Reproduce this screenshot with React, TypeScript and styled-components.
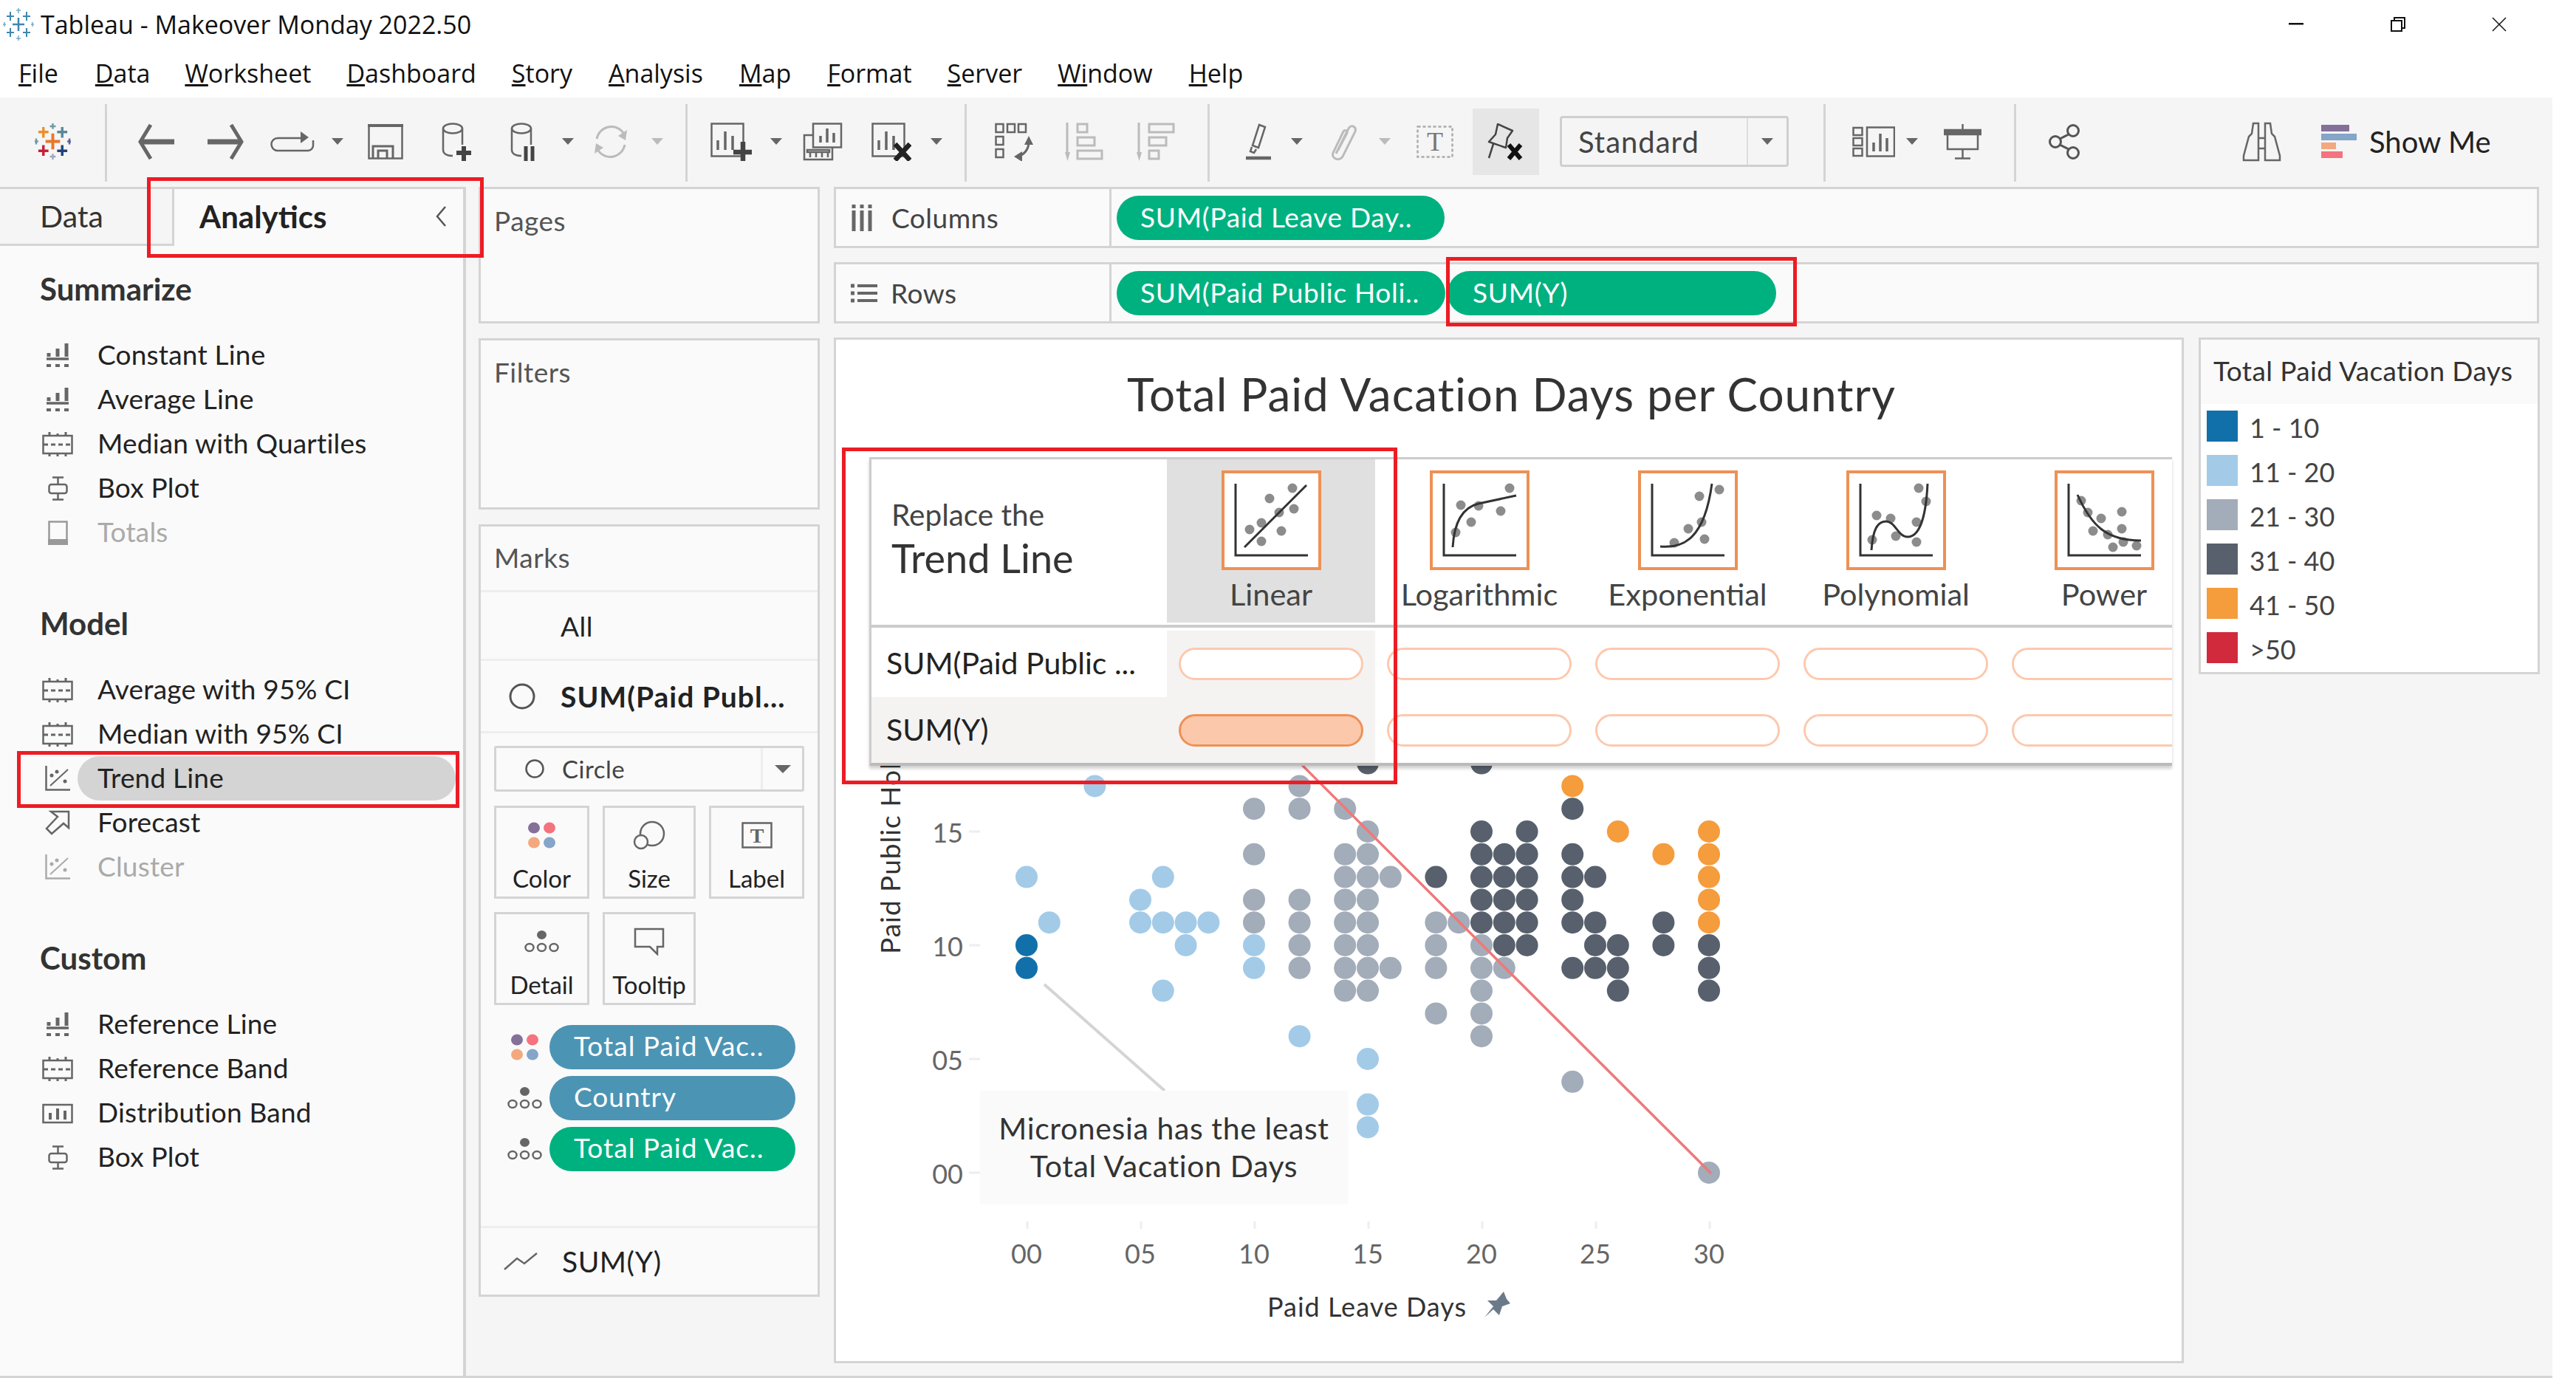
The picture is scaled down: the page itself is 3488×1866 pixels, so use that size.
import React from 'react';
import styled, { createGlobalStyle } from 'styled-components';

const TAB = `'Lato', 'Open Sans', sans-serif`;
const WIN = `'Open Sans', 'Noto Sans', sans-serif`;
const EDGE = '#d4d4d4';
const GREEN = '#00b180';
const BLUE = '#4c94b4';
const ICON = '#666666';
const FADED = '#bbbbbb';

const GlobalStyle = createGlobalStyle`
  html, body { margin: 0; padding: 0; background: #fff; }
  #root { width: 3488px; height: 1866px; overflow: hidden; }
`;

/* ---------- toolbar icons ---------- */

const Back = () => (
  <svg width="50" height="50" viewBox="0 0 50 50">
    <path d="M50 25H6" stroke={ICON} strokeWidth="7" fill="none" />
    <path d="M18 2L4 25l14 23" stroke={ICON} strokeWidth="5" fill="none" />
  </svg>
);
const Forward = () => (
  <svg width="50" height="50" viewBox="0 0 50 50">
    <path d="M0 25h44" stroke={ICON} strokeWidth="7" fill="none" />
    <path d="M32 2l14 23-14 23" stroke={ICON} strokeWidth="5" fill="none" />
  </svg>
);
const Loop = () => (
  <svg width="60" height="28" viewBox="0 0 60 28">
    <path d="M42 9H10a8.500 8.500 0 0 0 0 17h41a7 7 0 0 0 7-7V12" stroke={ICON} strokeWidth="2.500" fill="none" />
    <path d="M41 0l11 8-11 8z" fill={ICON} />
  </svg>
);
const Save = () => (
  <svg width="48" height="48" viewBox="0 0 48 48">
    <rect x="1.500" y="1.500" width="45" height="45" stroke={ICON} strokeWidth="2.500" fill="none" />
    <rect x="0" y="0" width="48" height="4" fill={ICON} />
    <path d="M7 46V30h27v16M14 46V36h12v10" stroke={ICON} strokeWidth="3" fill="none" />
  </svg>
);
const Can = ({ children }: { children: React.ReactNode }) => (
  <svg width="42" height="52" viewBox="0 0 42 52">
    <ellipse cx="16" cy="8" rx="13" ry="6.500" stroke={ICON} strokeWidth="2.500" fill="none" />
    <path d="M3 8v29c0 5 5 8 13 8M29 8v22" stroke={ICON} strokeWidth="2.500" fill="none" />
    {children}
  </svg>
);
const CanAdd = () => (
  <Can>
    <path d="M31 32v20M21 41h20" stroke="#444" strokeWidth="6" fill="none" />
  </Can>
);
const CanPause = () => (
  <Can>
    <path d="M22 32v20M31 32v20" stroke="#444" strokeWidth="5" fill="none" />
  </Can>
);
const Refresh = () => (
  <svg width="48" height="48" viewBox="0 0 48 48" fill="none" stroke={FADED} strokeWidth="3">
    <path d="M5 20A20 20 0 0 1 41 12" />
    <path d="M43 28A20 20 0 0 1 7 36" />
    <path d="M46 8l-2 14-10-6z" fill={FADED} stroke="none" />
    <path d="M2 40l2-14 10 6z" fill={FADED} stroke="none" />
  </svg>
);
const SheetBars = () => <path d="M10 37V24M20 37V12M30 37V18" stroke={ICON} strokeWidth="3.500" fill="none" />;
const NewSheet = () => (
  <svg width="56" height="52" viewBox="0 0 56 52">
    <rect x="1.500" y="1.500" width="43" height="44" stroke={ICON} strokeWidth="2.500" fill="none" />
    <SheetBars />
    <path d="M44 26v26M31 40h25" stroke="#444" strokeWidth="6.500" fill="none" />
  </svg>
);
const Duplicate = () => (
  <svg width="54" height="52" viewBox="0 0 54 52" fill="none" stroke={ICON}>
    <rect x="14" y="1.500" width="38" height="32" strokeWidth="2.500" />
    <path d="M24 27V18M33 27V8M42 27V14" strokeWidth="3.500" />
    <path d="M14 17H2v33h38V34" strokeWidth="2.500" />
    <path d="M6 37h30v3H6zM10 40v7M18 40v7M26 40v7M34 40v7" strokeWidth="2.500" />
  </svg>
);
const ClearSheet = () => (
  <svg width="54" height="52" viewBox="0 0 54 52">
    <rect x="1.500" y="1.500" width="43" height="44" stroke={ICON} strokeWidth="2.500" fill="none" />
    <SheetBars />
    <path d="M32 29l20 22M52 29L32 51" stroke="#222" strokeWidth="6.500" fill="none" />
  </svg>
);
const Swap = () => (
  <svg width="54" height="52" viewBox="0 0 54 52" fill="none" stroke={ICON} strokeWidth="2.500">
    <rect x="1.500" y="2" width="10" height="11" />
    <rect x="17" y="2" width="10" height="11" />
    <rect x="32" y="2" width="10" height="11" />
    <rect x="1.500" y="19" width="10" height="11" />
    <rect x="1.500" y="36" width="10" height="11" />
    <path d="M46 26c0 10-6 18-16 20" strokeWidth="3" />
    <path d="M46 18l6 12H40zM26 46l11-7v14z" fill={ICON} stroke="none" />
  </svg>
);
const SortAsc = () => (
  <svg width="52" height="52" viewBox="0 0 52 52" fill="none" stroke={FADED} strokeWidth="3">
    <path d="M3 0v44" />
    <path d="M0 40h7l-3.500 12z" fill={FADED} stroke="none" />
    <rect x="17" y="2" width="13" height="11" />
    <rect x="17" y="20" width="23" height="11" />
    <rect x="17" y="38" width="33" height="11" />
  </svg>
);
const SortDesc = () => (
  <svg width="52" height="52" viewBox="0 0 52 52" fill="none" stroke={FADED} strokeWidth="3">
    <path d="M3 0v44" />
    <path d="M0 40h7l-3.500 12z" fill={FADED} stroke="none" />
    <rect x="17" y="2" width="33" height="11" />
    <rect x="17" y="20" width="23" height="11" />
    <rect x="17" y="38" width="13" height="11" />
  </svg>
);
const Highlight = () => (
  <svg width="34" height="52" viewBox="0 0 34 52" fill="none" stroke={ICON} strokeWidth="2.500">
    <path d="M18 3l8 3-9 28-8-3zM8 33l-2 6 5 2 3-5" />
    <path d="M0 48h34" strokeWidth="4.500" />
  </svg>
);
const Clip = () => (
  <svg width="37" height="52" viewBox="0 0 37 52" fill="none" stroke={FADED} strokeWidth="3">
    <path d="M8 42L25 8c3-6 11-3 9 4L17 46c-4 7-16 3-13-5L18 12c2-3 6-1 5 2L11 37" />
  </svg>
);
const TextBox = () => (
  <svg width="50" height="44" viewBox="0 0 50 44" fill="none">
    <rect x="1.500" y="1.500" width="47" height="41" stroke="#aaa" strokeWidth="2.500" strokeDasharray="4 3" />
    <text x="25" y="34" textAnchor="middle" fontFamily="'Liberation Serif', serif" fontSize="36" fill="#777">T</text>
  </svg>
);
const PinX = () => (
  <svg width="50" height="50" viewBox="0 0 50 50" fill="none">
    <path d="M14 1L34 10L27 20L25 33L2 25L11 15ZM8 28L2 47" stroke="#444" strokeWidth="2.500" strokeLinejoin="round" />
    <path d="M29 29l16 19M45 29L29 48" stroke="#111" strokeWidth="6" />
  </svg>
);
const ViewCards = () => (
  <svg width="58" height="42" viewBox="0 0 58 42" fill="none" stroke={ICON} strokeWidth="2.500">
    <rect x="1.500" y="2" width="12" height="10" />
    <rect x="1.500" y="16" width="12" height="10" />
    <rect x="1.500" y="30" width="12" height="10" />
    <rect x="20" y="1.500" width="37" height="39" />
    <path d="M29 34V22M38 34V10M47 34V16" strokeWidth="3.500" />
  </svg>
);
const Presentation = () => (
  <svg width="51" height="48" viewBox="0 0 51 48" fill="none" stroke={ICON} strokeWidth="2.500">
    <path d="M25.500 0v8" />
    <path d="M0 8h51v6H0z" fill={ICON} />
    <path d="M5 14v20h41V14M25.500 34v12M15 46.500h21" />
  </svg>
);
const Share = () => (
  <svg width="43" height="48" viewBox="0 0 43 48" fill="none" stroke="#555" strokeWidth="3">
    <circle cx="33" cy="9" r="7.500" />
    <circle cx="9" cy="24" r="7.500" />
    <circle cx="33" cy="39" r="7.500" />
    <path d="M27 14L15 20M15 28l12 6" />
  </svg>
);
const Binoculars = () => (
  <svg width="53" height="54" viewBox="0 0 53 54" fill="none" stroke={ICON} strokeWidth="2.500">
    <path d="M15 2h7v50H2v-6l7-26 4-4zM38 2h-7v50h20v-6l-7-26-4-4z" />
    <path d="M22 22h9M22 36h9" />
  </svg>
);
const ShowMeBars = () => (
  <ShowBars>
    <ShowBar $w={38} $c="#85709a" />
    <ShowBar $w={48} $c="#85a5c9" />
    <ShowBar $w={20} $c="#f2a97e" />
    <ShowBar $w={29} $c="#f5727f" />
  </ShowBars>
);
const TableauMark = ({ size }: { size: number }) => (
  <svg width={size} height={size} viewBox="0 0 50 50" fill="none">
    <path d="M25 14v22M15 25h20" stroke="#e8762c" strokeWidth="4" />
    <path d="M12 5v15M5 12h14" stroke="#eb912b" strokeWidth="3.500" />
    <path d="M38 5v15M31 12h14" stroke="#5b879b" strokeWidth="3.500" />
    <path d="M12 30v15M5 38h14" stroke="#c72035" strokeWidth="3.500" />
    <path d="M38 30v15M31 38h14" stroke="#1f447a" strokeWidth="3.500" />
    <path d="M25 0v8M21 4h8" stroke="#7199a6" strokeWidth="2.500" />
    <path d="M25 42v8M21 46h8" stroke="#9ea8c2" strokeWidth="2.500" />
    <path d="M2 21v8M0 25h5" stroke="#7199a6" strokeWidth="2.500" />
    <path d="M48 21v8M45 25h5" stroke="#59629a" strokeWidth="2.500" />
  </svg>
);
const WindowLogo = () => (
  <svg width="42" height="46" viewBox="0 0 42 46" fill="none" stroke="#3f86b0">
    <path d="M21 14v18M13 23h16" strokeWidth="2.500" />
    <path d="M10 6v12M5 12h10M32 6v12M27 12h10M10 28v12M5 34h10M32 28v12M27 34h10" strokeWidth="2" />
    <path d="M21 1v7M18 4h6M21 38v7M18 42h6M2 20v6M0 23h4M40 20v6M38 23h4" strokeWidth="1.500" stroke="#7aa9c5" />
  </svg>
);

/* ---------- sidebar icons ---------- */

const RefLineIcon = () => (
  <svg width="30" height="33" viewBox="0 0 30 33">
    <path d="M3 18v-5M15 18V7M27 18V0" stroke={ICON} strokeWidth="5" fill="none" />
    <path d="M0 21h30" stroke={ICON} strokeWidth="3.500" fill="none" />
    <path d="M0 30h30" stroke={ICON} strokeWidth="4" strokeDasharray="6 6" fill="none" />
  </svg>
);
const BandIcon = () => (
  <svg width="42" height="33" viewBox="0 0 42 33" fill="none" stroke={ICON}>
    <path d="M1.500 5h39v24h-39z" strokeWidth="2.500" />
    <path d="M2 17h38" strokeWidth="3" strokeDasharray="6 4" />
    <path d="M10 0v5M21 2v3M32 0v5M10 29v4M21 29v4M32 29v4" strokeWidth="3" />
  </svg>
);
const DistIcon = () => (
  <svg width="42" height="33" viewBox="0 0 42 33" fill="none" stroke={ICON}>
    <path d="M1.500 5h39v24h-39z" strokeWidth="2.500" />
    <path d="M11 25V16M21 25V10M31 25V13" strokeWidth="4" />
  </svg>
);
const BoxIcon = () => (
  <svg width="27" height="33" viewBox="0 0 27 33" fill="none" stroke={ICON} strokeWidth="2.500">
    <path d="M6 1.500h15M13.500 1.500V11M13.500 23v9M6 31.500h15" />
    <rect x="1.500" y="11" width="24" height="12" rx="3" />
  </svg>
);
const TotalsIcon = () => (
  <svg width="27" height="33" viewBox="0 0 27 33">
    <path d="M1.500 1.500h24v30h-24z" fill="none" stroke="#999" strokeWidth="2.500" />
    <rect x="0" y="25" width="27" height="8" fill="#999" />
  </svg>
);
const TrendIcon = ({ color = ICON }: { color?: string }) => (
  <svg width="34" height="34" viewBox="0 0 34 34" fill="none" stroke={color}>
    <path d="M1.500 0v32.500H34" strokeWidth="2.500" />
    <path d="M7 27L31 5" strokeWidth="2" />
    <circle cx="9" cy="13" r="2.500" fill={color} stroke="none" />
    <circle cx="16" cy="8" r="2.500" fill={color} stroke="none" />
    <circle cx="27" cy="21" r="2.500" fill={color} stroke="none" />
  </svg>
);
const ForecastIcon = () => (
  <svg width="34" height="34" viewBox="0 0 34 34" fill="none" stroke={ICON} strokeWidth="2.500">
    <path d="M8 2h24v22l-7-6L9 32l-7-7 15-16z" />
  </svg>
);

/* ---------- trend model thumbnails ---------- */

interface TrendModel {
  name: string;
  curve: string;
  dots: [number, number][];
}

const MODELS: TrendModel[] = [
  {
    name: 'Linear',
    curve: 'M31 104L115 20',
    dots: [[96, 24], [65, 38], [98, 52], [78, 57], [54, 71], [38, 80], [81, 82], [54, 96]],
  },
  {
    name: 'Logarithmic',
    curve: 'M31 104C33 70 45 50 66 45L117 34',
    dots: [[108, 24], [42, 47], [66, 48], [96, 55], [56, 70], [35, 84]],
  },
  {
    name: 'Exponential',
    curve: 'M30 103C62 106 90 92 100 18',
    dots: [[110, 26], [83, 35], [86, 70], [68, 79], [90, 93], [49, 98]],
  },
  {
    name: 'Polynomial',
    curve: 'M34 108C36 80 42 69 54 69C66 69 70 90 83 90C100 90 108 60 110 18',
    dots: [[98, 24], [108, 42], [41, 61], [60, 65], [95, 70], [67, 89], [35, 94], [95, 97]],
  },
  {
    name: 'Power',
    curve: 'M31 33C50 75 70 95 117 95',
    dots: [[36, 41], [45, 57], [63, 65], [91, 56], [52, 82], [72, 87], [91, 79], [93, 97], [111, 102], [79, 104]],
  },
];

const ModelThumb = ({ model }: { model: TrendModel }) => (
  <svg width="135" height="135" viewBox="0 0 135 135">
    <rect x="2" y="2" width="131" height="131" fill="#fff" stroke="#ee9155" strokeWidth="4" />
    {model.dots.map(([x, y], i) => (
      <circle key={i} cx={x} cy={y} r="6.500" fill="#8c8c8c" />
    ))}
    <path d="M19 18V115H117" fill="none" stroke="#333" strokeWidth="3" />
    <path d={model.curve} fill="none" stroke="#333" strokeWidth="3" />
  </svg>
);

/* ---------- data ---------- */

type ToolItem =
  | { kind: 'icon'; w: number; ml: number; icon: React.ReactNode }
  | { kind: 'drop'; ml: number; faded?: boolean }
  | { kind: 'sep'; ml: number };

const TOOLS_LEFT: ToolItem[] = [
  { kind: 'icon', w: 49, ml: 47, icon: <TableauMark size={49} /> },
  { kind: 'sep', ml: 46 },
  { kind: 'icon', w: 50, ml: 41, icon: <Back /> },
  { kind: 'icon', w: 50, ml: 45, icon: <Forward /> },
  { kind: 'icon', w: 60, ml: 35, icon: <Loop /> },
  { kind: 'drop', ml: 23 },
  { kind: 'icon', w: 48, ml: 33, icon: <Save /> },
  { kind: 'icon', w: 42, ml: 51, icon: <CanAdd /> },
  { kind: 'icon', w: 42, ml: 51, icon: <CanPause /> },
  { kind: 'drop', ml: 29 },
  { kind: 'icon', w: 48, ml: 26, icon: <Refresh /> },
  { kind: 'drop', ml: 31, faded: true },
  { kind: 'sep', ml: 30 },
  { kind: 'icon', w: 56, ml: 31, icon: <NewSheet /> },
  { kind: 'drop', ml: 25 },
  { kind: 'icon', w: 54, ml: 28, icon: <Duplicate /> },
  { kind: 'icon', w: 54, ml: 39, icon: <ClearSheet /> },
  { kind: 'drop', ml: 26 },
  { kind: 'sep', ml: 30 },
  { kind: 'icon', w: 54, ml: 38, icon: <Swap /> },
  { kind: 'icon', w: 52, ml: 41, icon: <SortAsc /> },
  { kind: 'icon', w: 52, ml: 45, icon: <SortDesc /> },
  { kind: 'sep', ml: 44 },
  { kind: 'icon', w: 34, ml: 49, icon: <Highlight /> },
  { kind: 'drop', ml: 27 },
  { kind: 'icon', w: 37, ml: 37, icon: <Clip /> },
  { kind: 'drop', ml: 29, faded: true },
  { kind: 'icon', w: 50, ml: 35, icon: <TextBox /> },
];

const TOOLS_RIGHT: ToolItem[] = [
  { kind: 'sep', ml: 47 },
  { kind: 'icon', w: 58, ml: 36, icon: <ViewCards /> },
  { kind: 'drop', ml: 15 },
  { kind: 'icon', w: 51, ml: 35, icon: <Presentation /> },
  { kind: 'sep', ml: 44 },
  { kind: 'icon', w: 43, ml: 44, icon: <Share /> },
  { kind: 'icon', w: 53, ml: 219, icon: <Binoculars /> },
];

const MENU = [
  ['F', 'ile', 0],
  ['D', 'ata', 50],
  ['W', 'orksheet', 47],
  ['D', 'ashboard', 48],
  ['S', 'tory', 48],
  ['A', 'nalysis', 49],
  ['M', 'ap', 49],
  ['F', 'ormat', 49],
  ['S', 'erver', 48],
  ['Wi', 'ndow', 48],
  ['H', 'elp', 49],
] as const;

type SideRow = { label: string; icon: React.ReactNode; muted?: boolean; active?: boolean };
const SECTIONS: { title: string; rows: SideRow[] }[] = [
  {
    title: 'Summarize',
    rows: [
      { label: 'Constant Line', icon: <RefLineIcon /> },
      { label: 'Average Line', icon: <RefLineIcon /> },
      { label: 'Median with Quartiles', icon: <BandIcon /> },
      { label: 'Box Plot', icon: <BoxIcon /> },
      { label: 'Totals', icon: <TotalsIcon />, muted: true },
    ],
  },
  {
    title: 'Model',
    rows: [
      { label: 'Average with 95% CI', icon: <BandIcon /> },
      { label: 'Median with 95% CI', icon: <BandIcon /> },
      { label: 'Trend Line', icon: <TrendIcon />, active: true },
      { label: 'Forecast', icon: <ForecastIcon /> },
      { label: 'Cluster', icon: <TrendIcon color="#aaaaaa" />, muted: true },
    ],
  },
  {
    title: 'Custom',
    rows: [
      { label: 'Reference Line', icon: <RefLineIcon /> },
      { label: 'Reference Band', icon: <BandIcon /> },
      { label: 'Distribution Band', icon: <DistIcon /> },
      { label: 'Box Plot', icon: <BoxIcon /> },
    ],
  },
];

const LEGEND = [
  ['1 - 10', '#1170aa'],
  ['11 - 20', '#a3cbe8'],
  ['21 - 30', '#a3acb9'],
  ['31 - 40', '#57606c'],
  ['41 - 50', '#f59c3c'],
  ['>50', '#d12a3d'],
];

const pts = (...list: [number, number][]) => list;
const POINTS: { color: string; list: [number, number][] }[] = [
  {
    color: '#a3cbe8',
    list: pts([0, 13], [1, 11], [3, 17], [5, 12], [6, 13], [5, 11], [6, 11], [7, 11], [8, 11], [7, 10], [6, 8], [10, 10], [10, 9], [12, 6], [15, 5], [15, 3], [15, 2]),
  },
  { color: '#1170aa', list: pts([0, 10], [0, 9]) },
  {
    color: '#a3acb9',
    list: pts(
      [10, 16], [12, 17], [12, 16], [14, 16], [15, 15], [10, 14], [14, 14], [15, 14], [14, 13], [15, 13], [16, 13],
      [10, 12], [12, 12], [14, 12], [15, 12], [10, 11], [12, 11], [14, 11], [15, 11], [12, 10], [14, 10], [15, 10],
      [12, 9], [14, 9], [15, 9], [16, 9], [14, 8], [15, 8], [18, 11], [19, 11], [18, 10], [20, 10], [18, 9], [20, 9],
      [21, 9], [18, 7], [20, 8], [20, 7], [20, 6], [24, 4], [30, 0],
    ),
  },
  {
    color: '#57606c',
    list: pts(
      [15, 18], [20, 18], [18, 13], [20, 15], [22, 15], [20, 14], [21, 14], [22, 14], [20, 13], [21, 13], [22, 13],
      [20, 12], [21, 12], [22, 12], [20, 11], [21, 11], [22, 11], [21, 10], [22, 10], [24, 16], [24, 14], [24, 13],
      [25, 13], [24, 12], [24, 11], [25, 11], [25, 10], [26, 10], [24, 9], [25, 9], [26, 9], [26, 8], [28, 11],
      [28, 10], [30, 10], [30, 9], [30, 8],
    ),
  },
  { color: '#f59c3c', list: pts([24, 17], [26, 15], [28, 14], [30, 15], [30, 14], [30, 13], [30, 12], [30, 11]) },
];

// chart svg origin inside the page
const CHART_X = 1131;
const CHART_Y = 1000;
const px = (v: number) => 1390 + 30.8 * v - CHART_X;
const py = (v: number) => 1589 - 30.8 * v - CHART_Y;

const TICKS = [0, 5, 10, 15];
const XTICKS = [0, 5, 10, 15, 20, 25, 30];
const pad = (n: number) => (n < 10 ? `0${n}` : `${n}`);

/* ---------- App ---------- */

const Tools = ({ items }: { items: ToolItem[] }) => (
  <>
    {items.map((item, i) => {
      if (item.kind === 'sep') return <ToolSep key={i} $ml={item.ml} />;
      if (item.kind === 'drop') return <Caret key={i} $ml={item.ml} $c={item.faded ? FADED : ICON} />;
      return (
        <Tool key={i} $ml={item.ml} $w={item.w}>
          {item.icon}
        </Tool>
      );
    })}
  </>
);

const ColorDots = () => (
  <svg width="37" height="36" viewBox="0 0 37 36">
    <ellipse cx="8" cy="8" rx="8" ry="7.500" fill="#85709a" />
    <ellipse cx="29" cy="8" rx="8" ry="7.500" fill="#f5727f" />
    <ellipse cx="8" cy="28" rx="8" ry="7.500" fill="#f2a97e" />
    <ellipse cx="29" cy="28" rx="8" ry="7.500" fill="#85a5c9" />
  </svg>
);
const DetailDots = () => (
  <svg width="47" height="32" viewBox="0 0 47 32" fill="none" stroke={ICON} strokeWidth="2.500">
    <ellipse cx="23.500" cy="7" rx="6.500" ry="6" fill={ICON} stroke="none" />
    <ellipse cx="7" cy="24" rx="5.500" ry="5" />
    <ellipse cx="23.500" cy="24" rx="5.500" ry="5" />
    <ellipse cx="40" cy="24" rx="5.500" ry="5" />
  </svg>
);
const SizeIcon = () => (
  <svg width="44" height="40" viewBox="0 0 44 40" fill="none" stroke={ICON} strokeWidth="2.500">
    <circle cx="26" cy="18" r="16" />
    <circle cx="11" cy="29" r="9" fill="#fafafa" />
  </svg>
);
const LabelIcon = () => (
  <svg width="42" height="36" viewBox="0 0 42 36" fill="none">
    <rect x="1.500" y="1.500" width="39" height="33" stroke={ICON} strokeWidth="2.500" />
    <text x="21" y="28" textAnchor="middle" fontFamily="'Liberation Serif', serif" fontWeight="700" fontSize="28" fill={ICON}>T</text>
  </svg>
);
const TooltipIcon = () => (
  <svg width="42" height="38" viewBox="0 0 42 38" fill="none" stroke={ICON} strokeWidth="2.500">
    <path d="M2 2h38v24h-8v10l-10-10H2z" />
  </svg>
);

const App = () => (
  <>
    <GlobalStyle />
    <Page>
      <TitleBar>
        <WindowLogo />
        <TitleText>Tableau - Makeover Monday 2022.50</TitleText>
        <WinControls>
          <svg width="20" height="4" viewBox="0 0 20 4"><rect width="20" height="2.500" fill="#111" /></svg>
          <svg width="20" height="20" viewBox="0 0 20 20" fill="none" stroke="#111" strokeWidth="2">
            <rect x="1" y="5" width="14" height="14" />
            <path d="M5 5V1h14v14h-4" />
          </svg>
          <svg width="20" height="20" viewBox="0 0 20 20" fill="none" stroke="#111" strokeWidth="1.500">
            <path d="M1 1l18 18M19 1L1 19" />
          </svg>
        </WinControls>
      </TitleBar>

      <MenuBar>
        {MENU.map(([u, rest, ml]) => (
          <MenuItem key={u + rest} $ml={ml}>
            <u>{u}</u>
            {rest}
          </MenuItem>
        ))}
      </MenuBar>

      <AppArea>
        <Toolbar>
          <Tools items={TOOLS_LEFT} />
          <PinBtn>
            <PinX />
          </PinBtn>
          <Combo>
            <ComboText>Standard</ComboText>
            <ComboDrop>
              <Caret $ml={0} $c={ICON} />
            </ComboDrop>
          </Combo>
          <Tools items={TOOLS_RIGHT} />
          <ShowMe>
            <ShowMeBars />
            <ShowMeText>Show Me</ShowMeText>
          </ShowMe>
        </Toolbar>

        <Body>
          <Sidebar>
            <Tabs>
              <DataTab>Data</DataTab>
              <AnalyticsTab>
                Analytics
                <svg width="16" height="28" viewBox="0 0 16 28" fill="none" stroke="#555" strokeWidth="2.500">
                  <path d="M14 1L3 14l11 13" />
                </svg>
              </AnalyticsTab>
            </Tabs>
            {SECTIONS.map((section) => (
              <Section key={section.title}>
                <SectionTitle>{section.title}</SectionTitle>
                {section.rows.map((row) => (
                  <SideItem key={row.label}>
                    <SideIcon>{row.icon}</SideIcon>
                    <SideLabel $muted={row.muted} $active={row.active}>
                      {row.label}
                    </SideLabel>
                  </SideItem>
                ))}
              </Section>
            ))}
          </Sidebar>

          <CardsColumn>
            <PagesCard>Pages</PagesCard>
            <FiltersCard>Filters</FiltersCard>
            <MarksCard>
              <MarksHead>Marks</MarksHead>
              <MarksRow $h={93}>
                <AllLabel>All</AllLabel>
              </MarksRow>
              <MarksRow $h={98}>
                <svg width="36" height="36" viewBox="0 0 36 36" fill="none" stroke="#555" strokeWidth="3">
                  <circle cx="18" cy="18" r="16" />
                </svg>
                <BoldMark>SUM(Paid Publ...</BoldMark>
              </MarksRow>
              <MarkBody>
                <MarkCombo>
                  <svg width="28" height="26" viewBox="0 0 28 26" fill="none" stroke="#555" strokeWidth="2.500">
                    <circle cx="14" cy="13" r="11.500" />
                  </svg>
                  <MarkComboText>Circle</MarkComboText>
                  <MarkComboDrop>
                    <Caret $ml={0} $c={ICON} $wide />
                  </MarkComboDrop>
                </MarkCombo>
                <MarkGrid>
                  <MarkBtn>
                    <MarkIcon><ColorDots /></MarkIcon>Color
                  </MarkBtn>
                  <MarkBtn>
                    <MarkIcon><SizeIcon /></MarkIcon>Size
                  </MarkBtn>
                  <MarkBtn>
                    <MarkIcon><LabelIcon /></MarkIcon>Label
                  </MarkBtn>
                  <MarkBtn>
                    <MarkIcon><DetailDots /></MarkIcon>Detail
                  </MarkBtn>
                  <MarkBtn>
                    <MarkIcon><TooltipIcon /></MarkIcon>Tooltip
                  </MarkBtn>
                </MarkGrid>
                <FieldList>
                  <FieldRow>
                    <FieldIcon><ColorDots /></FieldIcon>
                    <FieldPill $c={BLUE}>Total Paid Vac..</FieldPill>
                  </FieldRow>
                  <FieldRow>
                    <FieldIcon><DetailDots /></FieldIcon>
                    <FieldPill $c={BLUE}>Country</FieldPill>
                  </FieldRow>
                  <FieldRow>
                    <FieldIcon><DetailDots /></FieldIcon>
                    <FieldPill $c={GREEN}>Total Paid Vac..</FieldPill>
                  </FieldRow>
                </FieldList>
              </MarkBody>
              <MarksFoot>
                <svg width="46" height="26" viewBox="0 0 46 26" fill="none" stroke={ICON} strokeWidth="2.500">
                  <path d="M1 24L18 9l10 7L45 2" />
                </svg>
                <FootText>SUM(Y)</FootText>
              </MarksFoot>
            </MarksCard>
          </CardsColumn>

          <Workspace>
            <Shelf>
              <ShelfHead>
                <svg width="30" height="36" viewBox="0 0 30 36" fill="none" stroke={ICON}>
                  <path d="M4 8v28M15 8v28M26 8v28" strokeWidth="5" />
                  <path d="M4 0v5M15 0v5M26 0v5" strokeWidth="5" />
                </svg>
                <ShelfLabel>Columns</ShelfLabel>
              </ShelfHead>
              <ShelfPill $w={444} $pad={32}>SUM(Paid Leave Day..</ShelfPill>
            </Shelf>
            <Shelf>
              <ShelfHead>
                <svg width="36" height="30" viewBox="0 0 36 30" fill="none" stroke={ICON}>
                  <path d="M0 5h5M0 15h5M0 25h5" strokeWidth="5" />
                  <path d="M9 5h27M9 15h27M9 25h27" strokeWidth="4" />
                </svg>
                <ShelfLabel $tight>Rows</ShelfLabel>
              </ShelfHead>
              <ShelfPill $w={445} $pad={32}>SUM(Paid Public Holi..</ShelfPill>
              <ShelfPill $w={445} $gap={3} $pad={34}>SUM(Y)</ShelfPill>
            </Shelf>

            <Stage>
              <VizPanel>
                <VizTitle>Total Paid Vacation Days per Country</VizTitle>
                <ChartSpacer />
                <svg width="1822" height="841" viewBox="0 0 1822 841">
                  <g fontFamily={TAB} fontSize="36" fill="#666">
                    {TICKS.map((t) => (
                      <g key={t}>
                        <rect x="180" y={py(t) - 1.500} width="15" height="3" fill="#eeeeee" />
                        <text x="172" y={py(t) + 15} textAnchor="end">{pad(t)}</text>
                      </g>
                    ))}
                    {XTICKS.map((t) => (
                      <g key={t}>
                        <rect x={px(t) - 1.500} y="655" width="3" height="10" fill="#eeeeee" />
                        <text x={px(t) - 1} y="712" textAnchor="middle">{pad(t)}</text>
                      </g>
                    ))}
                  </g>
                  {POINTS.map(({ color, list }) =>
                    list.map(([x, y]) => (
                      <circle key={`${color}${x}-${y}`} cx={px(x) - 1} cy={py(y)} r="15" fill={color} />
                    )),
                  )}
                  <path d="M282 334L445 478" stroke="#d4d4d4" strokeWidth="4" />
                  <path d="M2316 1590L1700 975" transform={`translate(${-CHART_X} ${-CHART_Y})`} stroke="#f07878" strokeWidth="3.500" />
                  <rect x="195" y="478" width="498" height="154" fill="#fafafa" />
                  <g fontFamily={TAB} fontSize="41" fill="#333" textAnchor="middle" letterSpacing="0.6">
                    <text x="444" y="544">Micronesia has the least</text>
                    <text x="444" y="595">Total Vacation Days</text>
                  </g>
                  <text x="87" y="293" transform="rotate(-90 87 293)" fontFamily={TAB} fontSize="37" fill="#333" letterSpacing="1">
                    Paid Public Holidays
                  </text>
                  <text x="584" y="784" fontFamily={TAB} fontSize="36" fill="#333" letterSpacing="1">
                    Paid Leave Days
                  </text>
                  <path d="M878 785L890 770L882 762L894 762L904 750L908 760L913 766L902 770L898 782L890 774Z" fill="#6b7a8a" />
                </svg>

                <TrendOverlay>
                  <OverlayHead>
                    <OverlayIntro>
                      <ReplaceText>Replace the</ReplaceText>
                      <TrendText>Trend Line</TrendText>
                    </OverlayIntro>
                    {MODELS.map((model, i) => (
                      <ModelCell key={model.name} $active={i === 0}>
                        <ModelThumb model={model} />
                        <ModelName>{model.name}</ModelName>
                      </ModelCell>
                    ))}
                  </OverlayHead>
                  <OverlayGrid>
                    <ToggleRow>
                      <MeasureName>SUM(Paid Public ...</MeasureName>
                      {MODELS.map((model, i) => (
                        <ToggleCell key={model.name} $tinted={i === 0}>
                          <Toggle />
                        </ToggleCell>
                      ))}
                    </ToggleRow>
                    <ToggleRow>
                      <MeasureName $tinted>SUM(Y)</MeasureName>
                      {MODELS.map((model, i) => (
                        <ToggleCell key={model.name} $tinted={i === 0}>
                          <Toggle $on={i === 0} />
                        </ToggleCell>
                      ))}
                    </ToggleRow>
                  </OverlayGrid>
                </TrendOverlay>
              </VizPanel>

              <Legend>
                <LegendTitle>Total Paid Vacation Days</LegendTitle>
                <LegendList>
                  {LEGEND.map(([label, color]) => (
                    <LegendRow key={label}>
                      <Swatch $c={color} />
                      {label}
                    </LegendRow>
                  ))}
                </LegendList>
              </Legend>
            </Stage>
          </Workspace>
        </Body>

        <RedBox $x={199} $y={108} $w={456} $h={109} />
        <RedBox $x={1958} $y={216} $w={475} $h={94} />
        <RedBox $x={1140} $y={474} $w={752} $h={456} />
        <RedBox $x={23} $y={885} $w={599} $h={77} />
      </AppArea>
    </Page>
  </>
);

export default App;

const Page = styled.div`
  width: 3488px;
  height: 1866px;
  background: #fff;
  display: flex;
  flex-direction: column;
  color: #111;
`;

const TitleBar = styled.header`
  height: 66px;
  display: flex;
  align-items: center;
  padding-left: 4px;
`;

const TitleText = styled.span`
  font-family: ${WIN};
  font-size: 34px;
  margin-left: 9px;
  color: #111;
`;

const WinControls = styled.div`
  margin-left: auto;
  width: 389px;
  padding-right: 94px;
  box-sizing: border-box;
  display: flex;
  justify-content: space-between;
  align-items: center;
`;

const MenuBar = styled.nav`
  height: 66px;
  display: flex;
  align-items: center;
  padding-left: 25px;
`;

const MenuItem = styled.span<{ $ml: number }>`
  font-family: ${WIN};
  font-size: 34px;
  margin-left: ${({ $ml }) => $ml}px;
  color: #111;
`;

const AppArea = styled.div`
  position: relative;
  width: 3456px;
  flex: 1;
  box-sizing: border-box;
  border-bottom: 3px solid ${EDGE};
  background: #f5f5f5;
  display: flex;
  flex-direction: column;
  min-height: 0;
`;

const Toolbar = styled.div`
  height: 121px;
  box-sizing: border-box;
  padding-bottom: 2px;
  display: flex;
  align-items: center;
  flex: none;
`;

const Tool = styled.div<{ $ml: number; $w: number }>`
  width: ${({ $w }) => $w}px;
  margin-left: ${({ $ml }) => $ml}px;
  flex: none;
  display: flex;
  align-items: center;
  justify-content: center;
`;

const ToolSep = styled.div<{ $ml: number }>`
  width: 3px;
  height: 105px;
  margin-top: 4px;
  margin-left: ${({ $ml }) => $ml}px;
  background: ${EDGE};
  flex: none;
`;

const Caret = styled.div<{ $ml: number; $c: string; $wide?: boolean }>`
  width: 0;
  height: 0;
  flex: none;
  margin-left: ${({ $ml }) => $ml}px;
  border-left: ${({ $wide }) => ($wide ? 11 : 8)}px solid transparent;
  border-right: ${({ $wide }) => ($wide ? 11 : 8)}px solid transparent;
  border-top: ${({ $wide }) => ($wide ? 11 : 9)}px solid ${({ $c }) => $c};
`;

const PinBtn = styled.div`
  width: 90px;
  height: 90px;
  margin-left: 26px;
  background: #e6e6e6;
  display: flex;
  align-items: center;
  justify-content: center;
  flex: none;
`;

const Combo = styled.div`
  width: 310px;
  height: 69px;
  margin-left: 28px;
  box-sizing: border-box;
  border: 3px solid #cfcfcf;
  border-radius: 4px;
  display: flex;
  align-items: center;
  flex: none;
`;

const ComboText = styled.span`
  flex: 1;
  padding-left: 22px;
  font-family: ${TAB};
  font-size: 40px;
  letter-spacing: 1px;
  color: #444;
`;

const ComboDrop = styled.div`
  width: 54px;
  height: 100%;
  box-sizing: border-box;
  border-left: 2px solid #dddddd;
  display: flex;
  align-items: center;
  justify-content: center;
`;

const ShowMe = styled.div`
  margin-left: 54px;
  display: flex;
  align-items: center;
`;

const ShowBars = styled.div`
  width: 48px;
  display: flex;
  flex-direction: column;
  gap: 3px;
`;

const ShowBar = styled.div<{ $w: number; $c: string }>`
  width: ${({ $w }) => $w}px;
  height: 9px;
  background: ${({ $c }) => $c};
`;

const ShowMeText = styled.span`
  margin-left: 17px;
  font-family: ${TAB};
  font-size: 40px;
  color: #222;
`;

const Body = styled.div`
  flex: 1;
  display: flex;
  min-height: 0;
`;

const Sidebar = styled.aside`
  width: 631px;
  box-sizing: border-box;
  background: #fafafa;
  border-right: 4px solid ${EDGE};
  flex: none;
`;

const Tabs = styled.div`
  height: 80px;
  display: flex;
  margin-bottom: 30px;
`;

const DataTab = styled.div`
  width: 236px;
  box-sizing: border-box;
  padding-left: 54px;
  background: #f5f5f5;
  border-top: 3px solid ${EDGE};
  border-right: 3px solid ${EDGE};
  border-bottom: 3px solid ${EDGE};
  font-family: ${TAB};
  font-size: 41px;
  color: #333;
  line-height: 74px;
`;

const AnalyticsTab = styled.div`
  flex: 1;
  box-sizing: border-box;
  padding: 0 22px 4px 34px;
  border-top: 3px solid ${EDGE};
  display: flex;
  align-items: center;
  justify-content: space-between;
  font-family: ${TAB};
  font-size: 42px;
  font-weight: 700;
  color: #222;
`;

const Section = styled.section`
  margin-bottom: 65px;
`;

const SectionTitle = styled.h3`
  margin: 0 0 32px 54px;
  height: 56px;
  font-family: ${TAB};
  font-size: 42px;
  line-height: 56px;
  font-weight: 700;
  color: #333;
`;

const SideItem = styled.div`
  height: 60px;
  display: flex;
  align-items: center;
`;

const SideIcon = styled.div`
  width: 42px;
  margin-left: 57px;
  flex: none;
  display: flex;
  align-items: center;
  justify-content: center;
`;

const SideLabel = styled.div<{ $muted?: boolean; $active?: boolean }>`
  margin-left: ${({ $active }) => ($active ? 6 : 33)}px;
  padding-left: ${({ $active }) => ($active ? 27 : 0)}px;
  width: ${({ $active }) => ($active ? '485px' : 'auto')};
  height: 60px;
  line-height: 58px;
  border-radius: 30px;
  background: ${({ $active }) => ($active ? EDGE : 'transparent')};
  font-family: ${TAB};
  font-size: 37px;
  letter-spacing: 0.2px;
  color: ${({ $muted }) => ($muted ? '#aaaaaa' : '#222')};
`;

const CardsColumn = styled.div`
  width: 462px;
  margin-left: 17px;
  display: flex;
  flex-direction: column;
  gap: 20px;
  flex: none;
  height: 1503px;
`;

const Card = styled.div`
  box-sizing: border-box;
  background: #fafafa;
  border: 3px solid ${EDGE};
  font-family: ${TAB};
  font-size: 37px;
  letter-spacing: 0.5px;
  color: #555;
`;

const PagesCard = styled(Card)`
  height: 185px;
  padding: 20px 0 0 18px;
`;

const FiltersCard = styled(Card)`
  height: 232px;
  padding: 20px 0 0 18px;
`;

const MarksCard = styled(Card)`
  height: 1046px;
  display: flex;
  flex-direction: column;
`;

const MarksHead = styled.div`
  height: 86px;
  padding-left: 18px;
  line-height: 84px;
  border-bottom: 3px solid #eeeeee;
`;

const MarksRow = styled.div<{ $h: number }>`
  height: ${({ $h }) => $h}px;
  box-sizing: border-box;
  display: flex;
  align-items: center;
  padding-left: 38px;
  border-bottom: 3px solid #eeeeee;
`;

const AllLabel = styled.span`
  margin-left: 70px;
  color: #222;
`;

const BoldMark = styled.span`
  margin-left: 34px;
  font-size: 39px;
  letter-spacing: 1px;
  font-weight: 700;
  color: #222;
`;

const MarkBody = styled.div`
  flex: 1;
  padding: 17px 18px 0;
`;

const MarkCombo = styled.div`
  height: 62px;
  box-sizing: border-box;
  border: 3px solid ${EDGE};
  border-radius: 3px;
  display: flex;
  align-items: center;
  padding-left: 38px;
`;

const MarkComboText = styled.span`
  margin-left: 23px;
  flex: 1;
  font-size: 33px;
  color: #444;
`;

const MarkComboDrop = styled.div`
  width: 53px;
  height: 100%;
  border-left: 3px solid #eeeeee;
  display: flex;
  align-items: center;
  justify-content: center;
`;

const MarkGrid = styled.div`
  display: grid;
  grid-template-columns: 129px 126px 129px;
  grid-auto-rows: 126px;
  gap: 18px 18px;
  margin-top: 19px;
`;

const MarkBtn = styled.div`
  box-sizing: border-box;
  border: 3px solid ${EDGE};
  display: flex;
  flex-direction: column;
  align-items: center;
  font-size: 33px;
  letter-spacing: 0;
  line-height: 44px;
  color: #222;
`;

const MarkIcon = styled.div`
  height: 73px;
  display: flex;
  align-items: center;
  justify-content: center;
`;

const FieldList = styled.div`
  margin-top: 27px;
  display: flex;
  flex-direction: column;
  gap: 9px;
`;

const FieldRow = styled.div`
  display: flex;
  align-items: center;
`;

const FieldIcon = styled.div`
  width: 47px;
  margin-left: 18px;
  display: flex;
  justify-content: center;
  flex: none;
`;

const FieldPill = styled.div<{ $c: string }>`
  width: 333px;
  height: 60px;
  margin-left: 10px;
  box-sizing: border-box;
  border-radius: 30px;
  padding-left: 33px;
  line-height: 56px;
  background: ${({ $c }) => $c};
  color: #fff;
  font-size: 37px;
  letter-spacing: 1px;
`;

const MarksFoot = styled.div`
  height: 93px;
  box-sizing: border-box;
  display: flex;
  align-items: center;
  padding-left: 31px;
  border-top: 3px solid #eeeeee;
`;

const FootText = styled.span`
  margin-left: 33px;
  font-size: 39px;
  color: #222;
`;

const Workspace = styled.main`
  width: 2309px;
  margin-left: 19px;
  flex: none;
  display: flex;
  flex-direction: column;
`;

const Shelf = styled.div`
  height: 83px;
  margin-bottom: 19px;
  box-sizing: border-box;
  background: #fafafa;
  border: 3px solid ${EDGE};
  display: flex;
  align-items: center;
  flex: none;
`;

const ShelfHead = styled.div`
  width: 373px;
  height: 100%;
  box-sizing: border-box;
  padding-left: 20px;
  border-right: 3px solid ${EDGE};
  display: flex;
  align-items: center;
  flex: none;
`;

const ShelfLabel = styled.span<{ $tight?: boolean }>`
  margin-left: ${({ $tight }) => ($tight ? 18 : 25)}px;
  font-family: ${TAB};
  font-size: 37px;
  letter-spacing: 0.5px;
  color: #444;
`;

const ShelfPill = styled.div<{ $w: number; $gap?: number; $pad: number }>`
  width: ${({ $w }) => $w}px;
  height: 60px;
  margin-left: ${({ $gap }) => $gap ?? 7}px;
  box-sizing: border-box;
  padding-left: ${({ $pad }) => $pad}px;
  border-radius: 30px;
  background: ${GREEN};
  color: #fff;
  font-family: ${TAB};
  font-size: 37px;
  line-height: 58px;
  letter-spacing: 0.7px;
  white-space: nowrap;
`;

const Stage = styled.div`
  display: flex;
  height: 1389px;
  flex: none;
`;

const VizPanel = styled.div`
  position: relative;
  width: 1828px;
  height: 100%;
  box-sizing: border-box;
  background: #fff;
  border: 3px solid ${EDGE};
  flex: none;
  display: flex;
  flex-direction: column;
`;

const VizTitle = styled.h1`
  margin: 0;
  height: 149px;
  line-height: 146px;
  text-align: center;
  font-family: ${TAB};
  font-size: 62px;
  font-weight: 400;
  letter-spacing: 1px;
  color: #333;
  box-sizing: border-box;
  padding-left: 7px;
  flex: none;
`;

const ChartSpacer = styled.div`
  height: 390px;
  flex: none;
`;

const TrendOverlay = styled.div`
  position: absolute;
  left: 45px;
  top: 159px;
  width: 1764px;
  height: 418px;
  box-sizing: border-box;
  background: #fff;
  border-top: 3px solid #cccccc;
  border-left: 3px solid #cccccc;
  border-bottom: 4px solid #bbbbbb;
  box-shadow: 0 4px 4px rgba(0, 0, 0, 0.18);
  overflow: hidden;
  font-family: ${TAB};
`;

const OverlayHead = styled.div`
  height: 228px;
  box-sizing: border-box;
  display: flex;
  border-bottom: 4px solid #cccccc;
`;

const OverlayIntro = styled.div`
  width: 400px;
  padding: 48px 0 0 27px;
  box-sizing: border-box;
  flex: none;
`;

const ReplaceText = styled.div`
  font-size: 40.5px;
  line-height: 54px;
  color: #444;
`;

const TrendText = styled.div`
  font-size: 54px;
  line-height: 64px;
  color: #333;
`;

const ModelCell = styled.div<{ $active: boolean }>`
  width: 282px;
  height: 221px;
  padding-top: 15px;
  box-sizing: border-box;
  background: ${({ $active }) => ($active ? '#e0e0e0' : 'transparent')};
  display: flex;
  flex-direction: column;
  align-items: center;
  flex: none;
`;

const ModelName = styled.div`
  margin-top: 5px;
  font-size: 41.5px;
  line-height: 54px;
  color: #444;
  white-space: nowrap;
`;

const OverlayGrid = styled.div`
  padding-top: 4px;
`;

const ToggleRow = styled.div`
  height: 90px;
  display: flex;
`;

const MeasureName = styled.div<{ $tinted?: boolean }>`
  width: 400px;
  box-sizing: border-box;
  padding-left: 20px;
  line-height: 88px;
  font-size: 41px;
  color: #222;
  white-space: nowrap;
  background: ${({ $tinted }) => ($tinted ? '#f4f3f2' : '#fff')};
  flex: none;
`;

const ToggleCell = styled.div<{ $tinted: boolean }>`
  width: 282px;
  background: ${({ $tinted }) => ($tinted ? '#f4f3f2' : 'transparent')};
  display: flex;
  align-items: center;
  padding-left: 16px;
  box-sizing: border-box;
  flex: none;
`;

const Toggle = styled.div<{ $on?: boolean }>`
  width: 250px;
  height: 44px;
  box-sizing: border-box;
  border-radius: 22px;
  flex: none;
  background: ${({ $on }) => ($on ? '#fbc8ac' : '#fff')};
  border: 3px solid ${({ $on }) => ($on ? '#ee9155' : '#fcc9ae')};
`;

const Legend = styled.aside`
  width: 462px;
  height: 456px;
  margin-left: 20px;
  box-sizing: border-box;
  background: #fff;
  border: 3px solid ${EDGE};
  flex: none;
  font-family: ${TAB};
`;

const LegendTitle = styled.div`
  height: 87px;
  padding-left: 17px;
  line-height: 84px;
  background: #fafafa;
  font-size: 37px;
  letter-spacing: 0.4px;
  color: #333;
  box-sizing: border-box;
`;

const LegendList = styled.div`
  padding: 9px 0 0 8px;
`;

const LegendRow = styled.div`
  height: 60px;
  display: flex;
  align-items: flex-start;
  font-size: 36px;
  line-height: 46px;
  color: #444;
`;

const Swatch = styled.div<{ $c: string }>`
  width: 42px;
  height: 42px;
  margin-right: 16px;
  background: ${({ $c }) => $c};
  flex: none;
`;

const RedBox = styled.div<{ $x: number; $y: number; $w: number; $h: number }>`
  position: absolute;
  left: ${({ $x }) => $x}px;
  top: ${({ $y }) => $y}px;
  width: ${({ $w }) => $w}px;
  height: ${({ $h }) => $h}px;
  box-sizing: border-box;
  border: 5px solid #ed1c24;
  pointer-events: none;
`;
